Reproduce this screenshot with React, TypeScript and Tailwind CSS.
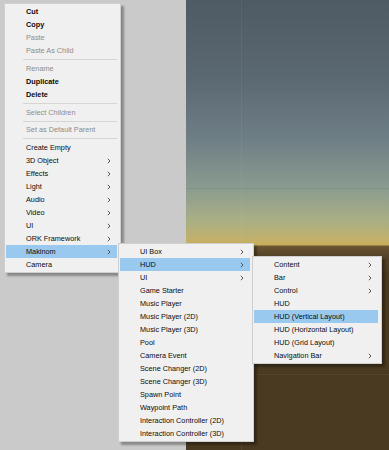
import React from 'react';

type Entry =
  | { kind: 'item'; label: string; sub?: boolean; disabled?: boolean; bold?: boolean; active?: boolean }
  | { kind: 'sep'; h: number };

const it = (label: string, opts: Partial<{ sub: boolean; disabled: boolean; bold: boolean; active: boolean }> = {}): Entry => ({
  kind: 'item',
  label,
  ...opts,
});
const sep = (h: number): Entry => ({ kind: 'sep', h });

const mainMenu: Entry[] = [
  it('Cut', { bold: true }),
  it('Copy', { bold: true }),
  it('Paste', { disabled: true }),
  it('Paste As Child', { disabled: true }),
  sep(5),
  it('Rename', { disabled: true }),
  it('Duplicate', { bold: true }),
  it('Delete', { bold: true }),
  sep(5),
  it('Select Children', { disabled: true }),
  sep(4),
  it('Set as Default Parent', { disabled: true }),
  sep(5),
  it('Create Empty'),
  it('3D Object', { sub: true }),
  it('Effects', { sub: true }),
  it('Light', { sub: true }),
  it('Audio', { sub: true }),
  it('Video', { sub: true }),
  it('UI', { sub: true }),
  it('ORK Framework', { sub: true }),
  it('Makinom', { sub: true, active: true }),
  it('Camera'),
];

const makinomMenu: Entry[] = [
  it('UI Box', { sub: true }),
  it('HUD', { sub: true, active: true }),
  it('UI', { sub: true }),
  it('Game Starter'),
  it('Music Player'),
  it('Music Player (2D)'),
  it('Music Player (3D)'),
  it('Pool'),
  it('Camera Event'),
  it('Scene Changer (2D)'),
  it('Scene Changer (3D)'),
  it('Spawn Point'),
  it('Waypoint Path'),
  it('Interaction Controller (2D)'),
  it('Interaction Controller (3D)'),
];

const hudMenu: Entry[] = [
  it('Content', { sub: true }),
  it('Bar', { sub: true }),
  it('Control', { sub: true }),
  it('HUD'),
  it('HUD (Vertical Layout)', { active: true }),
  it('HUD (Horizontal Layout)'),
  it('HUD (Grid Layout)'),
  it('Navigation Bar', { sub: true }),
];

const Chevron = () => (
  <svg width="4" height="6" viewBox="0 0 4 6" className="shrink-0">
    <path d="M0.8 0.8 L3 3 L0.8 5.2" fill="none" stroke="#4a4a4a" strokeWidth="0.9" />
  </svg>
);

function Menu({ entries, className }: { entries: Entry[]; className: string }) {
  return (
    <div
      className={`absolute flex flex-col bg-[#f0f0f0] border border-[#cfcfcf] p-[1px] shadow-[3px_3px_2px_rgba(0,0,0,0.32)] ${className}`}
      style={{ fontFamily: '"Liberation Sans", Arial, sans-serif' }}
    >
      {entries.map((e, i) =>
        e.kind === 'sep' ? (
          <div key={i} className="flex items-center" style={{ height: e.h }}>
            <div className="ml-[17px] mr-[2px] h-px flex-1 bg-[#d5d5d5]" />
          </div>
        ) : (
          <div
            key={i}
            className={`flex h-[13px] items-center mr-[2px] pl-[20px] pr-[6px] text-[7.3px] leading-none ${
              e.active ? 'bg-[#99c9ef]' : ''
            } ${e.disabled ? 'text-[#8c8c8c]' : 'text-[#0c0c0c]'} ${e.bold ? 'font-bold' : ''}`}
          >
            <span className="flex-1 whitespace-nowrap">{e.label}</span>
            {e.sub && <Chevron />}
          </div>
        )
      )}
    </div>
  );
}

export default function App() {
  return (
    <div className="relative flex h-[450px] w-[389px] overflow-hidden">
      {/* hierarchy panel */}
      <div className="w-[186px] shrink-0 bg-[#cacaca]" />

      {/* scene view */}
      <div className="relative flex-1 bg-[linear-gradient(to_bottom,#4e5a64_0px,#5b6973_80px,#6f7f86_140px,#8a9b8f_188px,#a9af85_220px,#c2b06a_240px,#c9ad58_245px,#6b5630_246px,#54432a_256px,#4a3a21_275px,#4a3a21_100%)]">
        <div className="absolute left-[55px] top-0 h-full w-px bg-[rgba(255,255,255,0.05)]" />
        <div className="absolute left-0 top-[188px] h-px w-full bg-[rgba(0,0,0,0.06)]" />
        <div className="absolute left-0 top-[374px] h-px w-full bg-[rgba(255,255,255,0.05)]" />
      </div>

      <Menu entries={mainMenu} className="left-[4px] top-[3px] w-[117px]" />
      <Menu entries={makinomMenu} className="left-[118px] top-[243px] w-[136px]" />
      <Menu entries={hudMenu} className="left-[252px] top-[256px] w-[130px]" />
    </div>
  );
}
